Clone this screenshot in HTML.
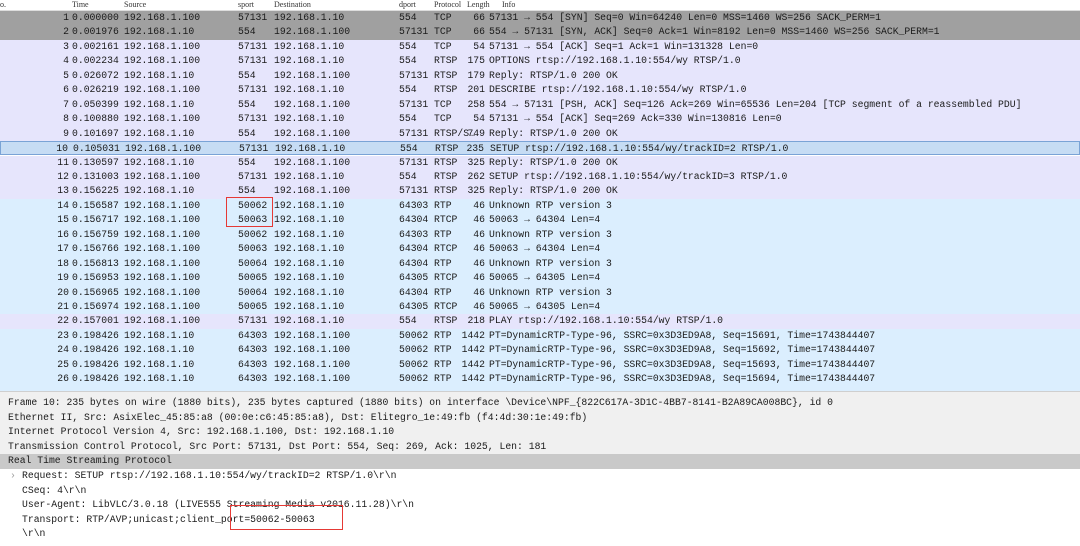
<!DOCTYPE html>
<html><head><meta charset="utf-8"><style>
*{margin:0;padding:0;box-sizing:border-box}
body{width:1080px;height:546px;overflow:hidden;background:#fff;font-family:"Liberation Mono","DejaVu Sans Mono",monospace;font-size:9.75px;color:#1a1a1a;position:relative}
.hd{position:absolute;left:0;top:0;width:1080px;height:11px;background:#fff;border-bottom:1px solid #ddd;font-family:"Liberation Serif",serif;font-size:8px;color:#333}
.hd span{position:absolute;top:0;line-height:10px}
.r{position:absolute;left:0;width:1080px;height:14.45px;line-height:14.45px;white-space:pre}
.r span{position:absolute;top:0}
.n{right:1011px;text-align:right}
.t{left:72px}.s{left:124px}.sp{left:238px}.d{left:274px}.dp{left:399px}.p{left:434px}
.l{right:595px;text-align:right}.i{left:489px}
.g{background:#a0a0a0}.v{background:#e6e5fc}.b{background:#dbeefe}
.sel{background:#c6dcf4;border:1px solid #7aa3d6}
.det{position:absolute;left:0;top:391px;width:1080px;height:64px;background:#f0f0f0;border-top:1px solid #cfcfcf}
.dl{position:absolute;white-space:pre;line-height:14.5px}
.rb{position:absolute;border:1.5px solid #e53935}
</style></head><body>
<div class="hd"><span style="left:0">o.</span><span style="left:72px">Time</span><span style="left:124px">Source</span><span style="left:238px">sport</span><span style="left:274px">Destination</span><span style="left:399px">dport</span><span style="left:434px">Protocol</span><span style="left:467px">Length</span><span style="left:502px">Info</span></div>

<div class="r g" style="top:11px"><span class="n">1</span><span class="t">0.000000</span><span class="s">192.168.1.100</span><span class="sp">57131</span><span class="d">192.168.1.10</span><span class="dp">554</span><span class="p">TCP</span><span class="l">66</span><span class="i">57131 → 554 [SYN] Seq=0 Win=64240 Len=0 MSS=1460 WS=256 SACK_PERM=1</span></div>
<div class="r g" style="top:25.45px"><span class="n">2</span><span class="t">0.001976</span><span class="s">192.168.1.10</span><span class="sp">554</span><span class="d">192.168.1.100</span><span class="dp">57131</span><span class="p">TCP</span><span class="l">66</span><span class="i">554 → 57131 [SYN, ACK] Seq=0 Ack=1 Win=8192 Len=0 MSS=1460 WS=256 SACK_PERM=1</span></div>
<div class="r v" style="top:39.9px"><span class="n">3</span><span class="t">0.002161</span><span class="s">192.168.1.100</span><span class="sp">57131</span><span class="d">192.168.1.10</span><span class="dp">554</span><span class="p">TCP</span><span class="l">54</span><span class="i">57131 → 554 [ACK] Seq=1 Ack=1 Win=131328 Len=0</span></div>
<div class="r v" style="top:54.35px"><span class="n">4</span><span class="t">0.002234</span><span class="s">192.168.1.100</span><span class="sp">57131</span><span class="d">192.168.1.10</span><span class="dp">554</span><span class="p">RTSP</span><span class="l">175</span><span class="i">OPTIONS rtsp://192.168.1.10:554/wy RTSP/1.0</span></div>
<div class="r v" style="top:68.8px"><span class="n">5</span><span class="t">0.026072</span><span class="s">192.168.1.10</span><span class="sp">554</span><span class="d">192.168.1.100</span><span class="dp">57131</span><span class="p">RTSP</span><span class="l">179</span><span class="i">Reply: RTSP/1.0 200 OK</span></div>
<div class="r v" style="top:83.25px"><span class="n">6</span><span class="t">0.026219</span><span class="s">192.168.1.100</span><span class="sp">57131</span><span class="d">192.168.1.10</span><span class="dp">554</span><span class="p">RTSP</span><span class="l">201</span><span class="i">DESCRIBE rtsp://192.168.1.10:554/wy RTSP/1.0</span></div>
<div class="r v" style="top:97.7px"><span class="n">7</span><span class="t">0.050399</span><span class="s">192.168.1.10</span><span class="sp">554</span><span class="d">192.168.1.100</span><span class="dp">57131</span><span class="p">TCP</span><span class="l">258</span><span class="i">554 → 57131 [PSH, ACK] Seq=126 Ack=269 Win=65536 Len=204 [TCP segment of a reassembled PDU]</span></div>
<div class="r v" style="top:112.15px"><span class="n">8</span><span class="t">0.100880</span><span class="s">192.168.1.100</span><span class="sp">57131</span><span class="d">192.168.1.10</span><span class="dp">554</span><span class="p">TCP</span><span class="l">54</span><span class="i">57131 → 554 [ACK] Seq=269 Ack=330 Win=130816 Len=0</span></div>
<div class="r v" style="top:126.6px"><span class="n">9</span><span class="t">0.101697</span><span class="s">192.168.1.10</span><span class="sp">554</span><span class="d">192.168.1.100</span><span class="dp">57131</span><span class="p">RTSP/S…</span><span class="l">749</span><span class="i">Reply: RTSP/1.0 200 OK</span></div>
<div class="r sel" style="top:141.05px"><span class="n">10</span><span class="t">0.105031</span><span class="s">192.168.1.100</span><span class="sp">57131</span><span class="d">192.168.1.10</span><span class="dp">554</span><span class="p">RTSP</span><span class="l">235</span><span class="i">SETUP rtsp://192.168.1.10:554/wy/trackID=2 RTSP/1.0</span></div>
<div class="r v" style="top:155.5px"><span class="n">11</span><span class="t">0.130597</span><span class="s">192.168.1.10</span><span class="sp">554</span><span class="d">192.168.1.100</span><span class="dp">57131</span><span class="p">RTSP</span><span class="l">325</span><span class="i">Reply: RTSP/1.0 200 OK</span></div>
<div class="r v" style="top:169.95px"><span class="n">12</span><span class="t">0.131003</span><span class="s">192.168.1.100</span><span class="sp">57131</span><span class="d">192.168.1.10</span><span class="dp">554</span><span class="p">RTSP</span><span class="l">262</span><span class="i">SETUP rtsp://192.168.1.10:554/wy/trackID=3 RTSP/1.0</span></div>
<div class="r v" style="top:184.4px"><span class="n">13</span><span class="t">0.156225</span><span class="s">192.168.1.10</span><span class="sp">554</span><span class="d">192.168.1.100</span><span class="dp">57131</span><span class="p">RTSP</span><span class="l">325</span><span class="i">Reply: RTSP/1.0 200 OK</span></div>
<div class="r b" style="top:198.85px"><span class="n">14</span><span class="t">0.156587</span><span class="s">192.168.1.100</span><span class="sp">50062</span><span class="d">192.168.1.10</span><span class="dp">64303</span><span class="p">RTP</span><span class="l">46</span><span class="i">Unknown RTP version 3</span></div>
<div class="r b" style="top:213.3px"><span class="n">15</span><span class="t">0.156717</span><span class="s">192.168.1.100</span><span class="sp">50063</span><span class="d">192.168.1.10</span><span class="dp">64304</span><span class="p">RTCP</span><span class="l">46</span><span class="i">50063 → 64304 Len=4</span></div>
<div class="r b" style="top:227.75px"><span class="n">16</span><span class="t">0.156759</span><span class="s">192.168.1.100</span><span class="sp">50062</span><span class="d">192.168.1.10</span><span class="dp">64303</span><span class="p">RTP</span><span class="l">46</span><span class="i">Unknown RTP version 3</span></div>
<div class="r b" style="top:242.2px"><span class="n">17</span><span class="t">0.156766</span><span class="s">192.168.1.100</span><span class="sp">50063</span><span class="d">192.168.1.10</span><span class="dp">64304</span><span class="p">RTCP</span><span class="l">46</span><span class="i">50063 → 64304 Len=4</span></div>
<div class="r b" style="top:256.65px"><span class="n">18</span><span class="t">0.156813</span><span class="s">192.168.1.100</span><span class="sp">50064</span><span class="d">192.168.1.10</span><span class="dp">64304</span><span class="p">RTP</span><span class="l">46</span><span class="i">Unknown RTP version 3</span></div>
<div class="r b" style="top:271.1px"><span class="n">19</span><span class="t">0.156953</span><span class="s">192.168.1.100</span><span class="sp">50065</span><span class="d">192.168.1.10</span><span class="dp">64305</span><span class="p">RTCP</span><span class="l">46</span><span class="i">50065 → 64305 Len=4</span></div>
<div class="r b" style="top:285.55px"><span class="n">20</span><span class="t">0.156965</span><span class="s">192.168.1.100</span><span class="sp">50064</span><span class="d">192.168.1.10</span><span class="dp">64304</span><span class="p">RTP</span><span class="l">46</span><span class="i">Unknown RTP version 3</span></div>
<div class="r b" style="top:300px"><span class="n">21</span><span class="t">0.156974</span><span class="s">192.168.1.100</span><span class="sp">50065</span><span class="d">192.168.1.10</span><span class="dp">64305</span><span class="p">RTCP</span><span class="l">46</span><span class="i">50065 → 64305 Len=4</span></div>
<div class="r v" style="top:314.45px"><span class="n">22</span><span class="t">0.157001</span><span class="s">192.168.1.100</span><span class="sp">57131</span><span class="d">192.168.1.10</span><span class="dp">554</span><span class="p">RTSP</span><span class="l">218</span><span class="i">PLAY rtsp://192.168.1.10:554/wy RTSP/1.0</span></div>
<div class="r b" style="top:328.9px"><span class="n">23</span><span class="t">0.198426</span><span class="s">192.168.1.10</span><span class="sp">64303</span><span class="d">192.168.1.100</span><span class="dp">50062</span><span class="p">RTP</span><span class="l">1442</span><span class="i">PT=DynamicRTP-Type-96, SSRC=0x3D3ED9A8, Seq=15691, Time=1743844407</span></div>
<div class="r b" style="top:343.35px"><span class="n">24</span><span class="t">0.198426</span><span class="s">192.168.1.10</span><span class="sp">64303</span><span class="d">192.168.1.100</span><span class="dp">50062</span><span class="p">RTP</span><span class="l">1442</span><span class="i">PT=DynamicRTP-Type-96, SSRC=0x3D3ED9A8, Seq=15692, Time=1743844407</span></div>
<div class="r b" style="top:357.8px"><span class="n">25</span><span class="t">0.198426</span><span class="s">192.168.1.10</span><span class="sp">64303</span><span class="d">192.168.1.100</span><span class="dp">50062</span><span class="p">RTP</span><span class="l">1442</span><span class="i">PT=DynamicRTP-Type-96, SSRC=0x3D3ED9A8, Seq=15693, Time=1743844407</span></div>
<div class="r b" style="top:372.25px"><span class="n">26</span><span class="t">0.198426</span><span class="s">192.168.1.10</span><span class="sp">64303</span><span class="d">192.168.1.100</span><span class="dp">50062</span><span class="p">RTP</span><span class="l">1442</span><span class="i">PT=DynamicRTP-Type-96, SSRC=0x3D3ED9A8, Seq=15694, Time=1743844407</span></div>
<div style="position:absolute;left:0;top:386.7px;width:1080px;height:5px;background:#dbeefe;border-bottom:1px solid #bbb"></div>

<div class="det"></div>
<div class="dl" style="left:8px;top:396px">Frame 10: 235 bytes on wire (1880 bits), 235 bytes captured (1880 bits) on interface \Device\NPF_{822C617A-3D1C-4BB7-8141-B2A89CA008BC}, id 0</div>
<div class="dl" style="left:8px;top:410.5px">Ethernet II, Src: AsixElec_45:85:a8 (00:0e:c6:45:85:a8), Dst: Elitegro_1e:49:fb (f4:4d:30:1e:49:fb)</div>
<div class="dl" style="left:8px;top:425px">Internet Protocol Version 4, Src: 192.168.1.100, Dst: 192.168.1.10</div>
<div class="dl" style="left:8px;top:439.5px">Transmission Control Protocol, Src Port: 57131, Dst Port: 554, Seq: 269, Ack: 1025, Len: 181</div>
<div style="position:absolute;left:0;top:454px;width:1080px;height:14.5px;background:#c9c9c9"></div>
<div class="dl" style="left:8px;top:454px">Real Time Streaming Protocol</div>
<div class="dl" style="left:10px;top:469px;color:#999">›</div>
<div class="dl" style="left:22px;top:469px">Request: SETUP rtsp://192.168.1.10:554/wy/trackID=2 RTSP/1.0\r\n</div>
<div class="dl" style="left:22px;top:483.5px">CSeq: 4\r\n</div>
<div class="dl" style="left:22px;top:498px">User-Agent: LibVLC/3.0.18 (LIVE555 Streaming Media v2016.11.28)\r\n</div>
<div class="dl" style="left:22px;top:512.5px">Transport: RTP/AVP;unicast;client_port=50062-50063</div>
<div class="dl" style="left:22px;top:527px">\r\n</div>

<div class="rb" style="left:226px;top:197px;width:47px;height:30px"></div>
<div class="rb" style="left:230px;top:505px;width:113px;height:25px"></div>
</body></html>
